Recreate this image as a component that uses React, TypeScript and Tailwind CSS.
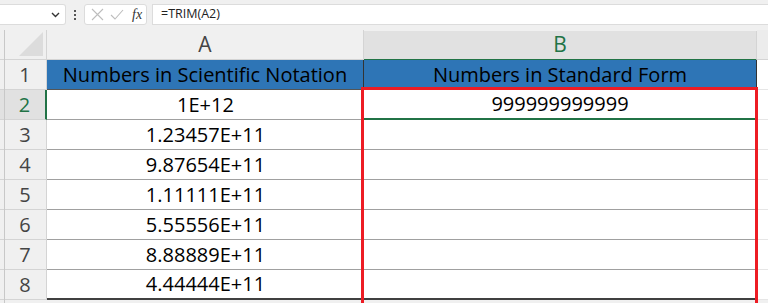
import React from "react";

const rowsA = [
  "1E+12",
  "1.23457E+11",
  "9.87654E+11",
  "1.11111E+11",
  "5.55556E+11",
  "8.88889E+11",
  "4.44444E+11",
];

export default function App() {
  const font = { fontFamily: '"Open Sans", "Noto Sans", sans-serif' };
  return (
    <div className="w-[768px] h-[303px] overflow-hidden bg-[#f0f0f0] relative" style={font}>
      {/* formula bar */}
      <div className="h-[30px] flex items-start pt-[4px] border-b border-[#f0f0f0]">
        <div className="w-[66px] h-[21px] bg-white border-y border-r border-[#dcdcdc] rounded-r-[3px] flex items-center justify-end pr-[5px]">
          <svg width="9" height="6" viewBox="0 0 9 6">
            <path d="M1 1 L4.5 4.5 L8 1" fill="none" stroke="#333" strokeWidth="1.4" />
          </svg>
        </div>
        <div className="w-[18px] h-[21px] flex flex-col items-center justify-center gap-[2px]">
          <div className="w-[2px] h-[2px] bg-[#555]" />
          <div className="w-[2px] h-[2px] bg-[#555]" />
          <div className="w-[2px] h-[2px] bg-[#555]" />
        </div>
        <div className="w-[63px] h-[21px] bg-white border border-[#dcdcdc] rounded-[3px] flex items-center pl-[6px] gap-[6px]">
          <svg width="13" height="13" viewBox="0 0 13 13">
            <path d="M1 1 L12 12 M12 1 L1 12" stroke="#bdbdbd" strokeWidth="1.1" fill="none" />
          </svg>
          <svg width="14" height="11" viewBox="0 0 14 11">
            <path d="M1 6 L5 10 L13 1" stroke="#bdbdbd" strokeWidth="1.1" fill="none" />
          </svg>
          <span className="text-[14px] italic text-[#333] leading-none ml-[2px]" style={{ fontFamily: '"Liberation Serif", serif' }}>
            fx
          </span>
        </div>
        <div className="ml-[5px] flex-1 h-[21px] bg-white border-y border-l border-[#dcdcdc] flex items-center pl-[8px] text-[12.5px] text-[#222]">
          =TRIM(A2)
        </div>
      </div>

      {/* grid */}
      <div className="flex">
        {/* row headers column */}
        <div className="w-[47px] relative">
          <div className="absolute left-[4px] top-0 w-px h-[280px] bg-[#c8c8c8]" />
          <div className="h-[30px] border-r border-b border-[#d4d4d4] flex items-end justify-end pr-[3px] pb-[3px]">
            <svg width="24" height="24" viewBox="0 0 24 24">
              <path d="M24 0 L24 24 L0 24 Z" fill="#dcdcdc" />
            </svg>
          </div>
          {[1, 2, 3, 4, 5, 6, 7, 8].map((n) => (
            <div
              key={n}
              className={
                n === 2
                  ? "h-[30px] bg-[#e1e1e1] border-r-2 border-r-[#217346] border-b border-b-[#d4d4d4] flex items-center justify-center text-[20px] text-[#217346] pl-[4px]"
                  : "h-[30px] border-r border-b border-[#d4d4d4] flex items-center justify-center text-[20px] text-[#444] pl-[4px]"
              }
            >
              {n}
            </div>
          ))}
        </div>

        {/* column A */}
        <div className="w-[317px]">
          <div className="h-[30px] border-r border-b border-[#d4d4d4] flex items-center justify-center text-[21px] text-[#444]">
            A
          </div>
          <div className="h-[30px] bg-[#2e75b6] border-r border-[#333] border-b border-b-[#555] flex items-center justify-center text-[20px] text-black">
            Numbers in Scientific Notation
          </div>
          {rowsA.map((v, i) => (
            <div
              key={v}
              className={
                i === rowsA.length - 1
                  ? "h-[30px] bg-white border-b-2 border-b-[#404040] flex items-center justify-center text-[20px] text-black"
                  : "h-[30px] bg-white border-b border-b-[#a0a0a0] flex items-center justify-center text-[20px] text-black"
              }
            >
              {v}
            </div>
          ))}
        </div>

        {/* column B */}
        <div className="w-[393px] relative">
          <div className="h-[30px] bg-[#e1e1e1] border-b-2 border-b-[#217346] border-r border-r-[#d4d4d4] flex items-center justify-center text-[21px] text-[#217346] mt-px">
            B
          </div>
          <div className="h-[30px] bg-[#2e75b6] border-r border-r-[#333] border-b border-b-[#555] flex items-center justify-center text-[20px] text-black -mt-px">
            Numbers in Standard Form
          </div>
          {rowsA.map((v, i) => (
            <div
              key={v}
              className={
                i === 0
                  ? "h-[30px] bg-white border-b-2 border-b-[#217346] border-r border-r-[#333] flex items-center justify-center text-[20px] text-black"
                  : i === rowsA.length - 1
                  ? "h-[30px] bg-white border-b-2 border-b-[#404040] border-r border-r-[#333]"
                  : "h-[30px] bg-white border-b border-b-[#a0a0a0] border-r border-r-[#333]"
              }
            >
              {i === 0 ? "999999999999" : ""}
            </div>
          ))}
          {/* red highlight box */}
          <div className="absolute left-[-3px] top-[57px] w-[397px] h-[250px] border-[3px] border-[#ed1c24] pointer-events-none" />
        </div>

        {/* remainder */}
        <div className="flex-1">
          <div className="h-[30px] bg-[#ececec] border-b border-[#d4d4d4]" />
          {[0, 1, 2, 3, 4, 5, 6, 7].map((n) => (
            <div key={n} className="h-[30px] bg-white border-b border-[#e6e6e6]" />
          ))}
        </div>
      </div>
    </div>
  );
}
